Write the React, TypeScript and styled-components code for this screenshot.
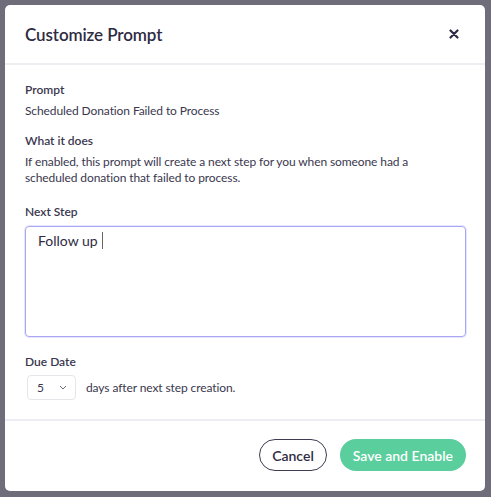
import React from 'react'
import styled, { createGlobalStyle } from 'styled-components'

const GlobalStyle = createGlobalStyle`
  html, body {
    margin: 0;
    padding: 0;
    background: #6f6d7a;
  }
  body {
    font-family: Lato, "Noto Sans", sans-serif;
    color: #2e2b43;
  }
`

const Backdrop = styled.div`
  width: 491px;
  height: 497px;
  padding: 5px 6px 6px 5px;
  box-sizing: border-box;
`

const Modal = styled.div`
  background: #fff;
  border-radius: 5px;
  height: 486px;
  display: flex;
  flex-direction: column;
  overflow: hidden;
`

const Header = styled.div`
  height: 58px;
  display: flex;
  align-items: center;
  justify-content: space-between;
  padding: 0 26px 0 20px;
  border-bottom: 2px solid #eeeef2;
`

const Title = styled.h2`
  margin: 0;
  font-size: 17px;
  font-weight: 600;
  color: #2e2b43;
  letter-spacing: -0.1px;
`

const CloseButton = styled.button`
  border: none;
  background: none;
  padding: 0;
  display: flex;
  cursor: pointer;
`

const Body = styled.div`
  flex: 1;
  padding: 17px 19px 0 20px;
  display: flex;
  flex-direction: column;
`

const Label = styled.div<{ $top?: number }>`
  font-size: 12px;
  font-weight: 600;
  color: #3a374e;
  margin-top: ${p => p.$top ?? 0}px;
  line-height: 16px;
`

const Text = styled.div<{ $top?: number }>`
  font-size: 12px;
  color: #3a374e;
  line-height: 16px;
  margin-top: ${p => p.$top ?? 5}px;
  letter-spacing: -0.1px;
  max-width: 420px;
`

const TextArea = styled.div`
  margin-top: 6px;
  height: 111px;
  border: 1px solid #a9a6f5;
  border-radius: 4px;
  box-shadow: 0 0 0 1px #e6e5fd;
  padding: 5px 12px;
  box-sizing: border-box;
  font-size: 14px;
  color: #2e2b43;
  display: flex;
  align-items: flex-start;
`

const Caret = styled.span`
  display: inline-block;
  width: 1px;
  height: 17px;
  background: #666;
  margin-left: 4px;
`

const DueRow = styled.div`
  display: flex;
  align-items: center;
  margin-top: 5px;
  margin-left: 2px;
  gap: 10px;
`

const Select = styled.div`
  width: 49px;
  height: 25px;
  border: 1px solid #e6e6ea;
  border-radius: 4px;
  box-sizing: border-box;
  display: flex;
  align-items: center;
  justify-content: space-between;
  padding: 0 8px 0 9px;
  font-size: 12px;
  color: #3a374e;
`

const Footer = styled.div`
  height: 68px;
  border-top: 2px solid #eeeef2;
  display: flex;
  align-items: center;
  justify-content: flex-end;
  gap: 13px;
  padding: 0 19px 2px 0;
`

const Button = styled.button<{ $primary?: boolean }>`
  height: 32px;
  border-radius: 16px;
  font-family: Lato, "Noto Sans", sans-serif;
  font-size: 14px;
  font-weight: 600;
  padding: 0 ${p => (p.$primary ? 13 : 12)}px;
  cursor: pointer;
  border: ${p => (p.$primary ? 'none' : '1px solid #3e3b53')};
  background: ${p => (p.$primary ? '#5ace9d' : '#fff')};
  color: ${p => (p.$primary ? '#fff' : '#2e2b43')};
`

const App = () => {
  return (
    <>
      <GlobalStyle />
      <Backdrop>
        <Modal>
          <Header>
            <Title>Customize Prompt</Title>
            <CloseButton aria-label="close">
              <svg width="10" height="10" viewBox="0 0 10 10">
                <path d="M1.5 1.5 L8.5 8.5 M8.5 1.5 L1.5 8.5" stroke="#2e2b43" strokeWidth="2.2" strokeLinecap="round" />
              </svg>
            </CloseButton>
          </Header>
          <Body>
            <Label>Prompt</Label>
            <Text>Scheduled Donation Failed to Process</Text>
            <Label $top={14}>What it does</Label>
            <Text>
              If enabled, this prompt will create a next step for you when someone had a scheduled donation that failed to process.
            </Text>
            <Label $top={18}>Next Step</Label>
            <TextArea>
              Follow up<Caret />
            </TextArea>
            <Label $top={17}>Due Date</Label>
            <DueRow>
              <Select>
                5
                <svg width="8" height="5" viewBox="0 0 8 5">
                  <path d="M1 1 L4 4 L7 1" fill="none" stroke="#6b6980" strokeWidth="1" />
                </svg>
              </Select>
              <Text $top={0}>days after next step creation.</Text>
            </DueRow>
          </Body>
          <Footer>
            <Button>Cancel</Button>
            <Button $primary>Save and Enable</Button>
          </Footer>
        </Modal>
      </Backdrop>
    </>
  )
}

export default App
